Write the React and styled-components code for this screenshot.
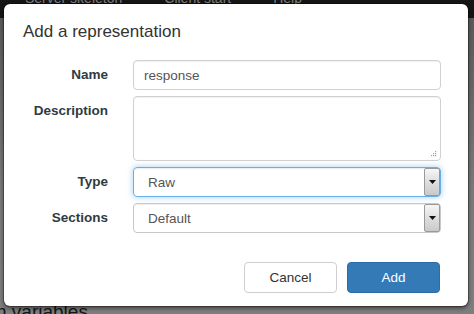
import React from "react";
import styled, { createGlobalStyle } from "styled-components";

const Global = createGlobalStyle`
  html, body { margin: 0; padding: 0; }
  body { background: #6e6e6e; font-family: "Liberation Sans", Arial, sans-serif; }
  * { box-sizing: border-box; }
`;

const Page = styled.div`
  position: relative;
  width: 474px;
  height: 314px;
  overflow: hidden;
  display: flex;
  flex-direction: column;
  background: linear-gradient(#575757, #7a7a7a 60%, #7e7e7e);
`;

const Navbar = styled.div`
  height: 18px;
  flex: none;
  background: #151515;
  display: flex;
  gap: 42px;
  padding-left: 25px;
  overflow: hidden;
`;

const NavItem = styled.span`
  font-size: 14px;
  line-height: 14px;
  margin-top: -9px;
  color: #7d7d7d;
  white-space: nowrap;
`;

const Content = styled.div`
  flex: 1;
  display: flex;
  flex-direction: column;
  justify-content: flex-end;
`;

const BottomHeading = styled.div`
  font-size: 19px;
  line-height: 19px;
  color: #161616;
  margin-left: -4px;
  margin-bottom: -7px;
  white-space: nowrap;
`;

const Modal = styled.div`
  position: absolute;
  left: 4px;
  top: 4px;
  width: 464px;
  background: #fff;
  border-radius: 6px;
  box-shadow: 0 2px 4px rgba(0, 0, 0, 0.55), 0 0 0 1px rgba(0, 0, 0, 0.25);
  padding: 15px 27px 13px 19px;
  display: flex;
  flex-direction: column;
`;

const Title = styled.h4`
  margin: 0;
  font-size: 17px;
  line-height: 26px;
  font-weight: normal;
  color: #333;
`;

const Form = styled.div`
  margin-top: 15px;
  display: grid;
  grid-template-columns: 85px 308px;
  column-gap: 25px;
  row-gap: 6px;
`;

const Label = styled.label`
  text-align: right;
  font-weight: bold;
  font-size: 13.5px;
  line-height: 18px;
  padding-top: 6px;
  color: #2e3b44;
  white-space: nowrap;
`;

const Input = styled.div`
  height: 30px;
  border: 1px solid #d0d0d0;
  border-radius: 4px;
  padding: 0 10px;
  display: flex;
  align-items: center;
  font-size: 13.5px;
  color: #555;
  box-shadow: inset 0 1px 1px rgba(0, 0, 0, 0.06);
`;

const TextAreaWrap = styled.div`
  position: relative;
  height: 65px;
  border: 1px solid #d0d0d0;
  border-radius: 4px;
  box-shadow: inset 0 1px 1px rgba(0, 0, 0, 0.06);
`;

const Grip = styled.svg`
  position: absolute;
  right: 3px;
  bottom: 2px;
`;

const Select = styled.div`
  height: 30px;
  border: 1px solid ${(p) => (p.$focused ? "#66afe9" : "#c8c8c8")};
  border-radius: 4px;
  display: flex;
  align-items: stretch;
  font-size: 13.5px;
  color: #555;
  box-shadow: ${(p) =>
    p.$focused
      ? "inset 0 1px 1px rgba(0,0,0,.075), 0 0 6px rgba(102,175,233,.6)"
      : "inset 0 1px 1px rgba(0,0,0,.06)"};
`;

const SelectText = styled.span`
  flex: 1;
  display: flex;
  align-items: center;
  padding-left: 14px;
`;

const ArrowBox = styled.span`
  width: 16px;
  flex: none;
  border: 1px solid #9a9a9a;
  border-radius: 2px;
  background: linear-gradient(#f6f6f6, #dedede 50%, #c9c9c9);
  display: flex;
  align-items: center;
  justify-content: center;
`;

const Footer = styled.div`
  margin-top: 29px;
  display: flex;
  justify-content: flex-end;
  gap: 10px;
  padding-right: 1px;
`;

const Button = styled.button`
  width: 93px;
  height: 31px;
  border-radius: 4px;
  font-family: "Liberation Sans", Arial, sans-serif;
  font-size: 13.5px;
  border: 1px solid ${(p) => (p.$primary ? "#2e6da4" : "#cfcfcf")};
  background: ${(p) => (p.$primary ? "#337ab7" : "#fff")};
  color: ${(p) => (p.$primary ? "#fff" : "#333")};
  padding: 0;
`;

const Arrow = () => (
  <svg width="7" height="4" viewBox="0 0 7 4">
    <path d="M0 0H7L3.5 4Z" fill="#111" />
  </svg>
);

export default function App() {
  return (
    <>
      <Global />
      <Page>
        <Navbar>
          <NavItem>Server skeleton</NavItem>
          <NavItem>Client start</NavItem>
          <NavItem>Help</NavItem>
        </Navbar>
        <Content>
          <BottomHeading>h variables</BottomHeading>
        </Content>
        <Modal>
          <Title>Add a representation</Title>
          <Form>
            <Label>Name</Label>
            <Input>response</Input>
            <Label>Description</Label>
            <TextAreaWrap>
              <Grip width="7" height="7" viewBox="0 0 7 7">
                <g fill="#a0a0a0">
                  <rect x="5" y="0" width="1.2" height="1.2" />
                  <rect x="3" y="2" width="1.2" height="1.2" />
                  <rect x="5" y="2" width="1.2" height="1.2" />
                  <rect x="1" y="4" width="1.2" height="1.2" />
                  <rect x="3" y="4" width="1.2" height="1.2" />
                  <rect x="5" y="4" width="1.2" height="1.2" />
                </g>
              </Grip>
            </TextAreaWrap>
            <Label>Type</Label>
            <Select $focused>
              <SelectText>Raw</SelectText>
              <ArrowBox>
                <Arrow />
              </ArrowBox>
            </Select>
            <Label>Sections</Label>
            <Select>
              <SelectText>Default</SelectText>
              <ArrowBox>
                <Arrow />
              </ArrowBox>
            </Select>
          </Form>
          <Footer>
            <Button>Cancel</Button>
            <Button $primary>Add</Button>
          </Footer>
        </Modal>
      </Page>
    </>
  );
}
